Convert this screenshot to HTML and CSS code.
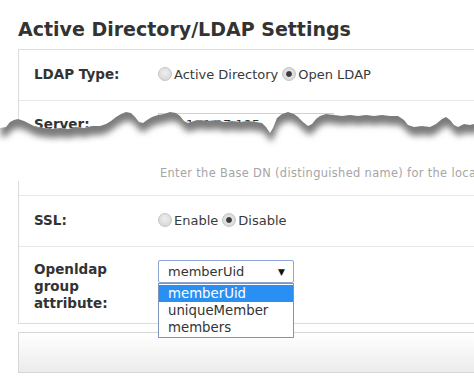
FILE: index.html
```html
<!DOCTYPE html>
<html lang="en">
  <head>
    <meta charset="UTF-8" />
    <meta name="viewport" content="width=device-width, initial-scale=1.0" />
    <title>Active Directory/LDAP Settings</title>
    <link rel="stylesheet" href="styles.css">
  </head>
  <body>
    <div class="page">
      <h1 class="title">Active Directory/LDAP Settings</h1>

      <div class="panel">
        <!-- LDAP type -->
        <div class="row">
          <div class="label">LDAP Type:</div>
          <div class="value">
            <label class="radio"><input type="radio" name="ldapType" />Active Directory</label>
            <label class="radio"><input type="radio" name="ldapType" checked />Open LDAP</label>
          </div>
        </div>

        <!-- Server (torn part) -->
        <div class="row row-server">
          <div class="label">Server:</div>
          <div class="value value-stack">
            <input class="text-input" type="text" value="10.110.27.185" />
            <div class="help">Enter the Base DN (distinguished name) for the loca</div>
          </div>
        </div>

        <!-- SSL -->
        <div class="row">
          <div class="label">SSL:</div>
          <div class="value">
            <label class="radio"><input type="radio" name="ssl" />Enable</label>
            <label class="radio"><input type="radio" name="ssl" checked />Disable</label>
          </div>
        </div>

        <!-- Group attribute -->
        <div class="row row-group">
          <div class="label">Openldap<br />group<br />attribute:</div>
          <div class="value value-top">
            <div class="select">
              <span class="select-text">memberUid</span>
              <span class="select-arrow">&#9660;</span>
              <ul class="options">
                <li class="selected">memberUid</li>
                <li>uniqueMember</li>
                <li>members</li>
              </ul>
            </div>
          </div>
        </div>
      </div>

      <div class="button-bar"></div>

      <!-- torn paper edge -->
      <svg class="tear" width="474" height="82" viewBox="0 0 474 82">
        <defs>
          <clipPath id="below">
            <path d="M0,28 L6,27 L10,22 L14,20 L18,19 L24,21 L30,24 L36,27 L44,28 L52,29 L60,28 L68,29 L76,27 L84,28 L92,26 L100,26 L106,24 L111,21 L116,17 L121,14 L126,12 L131,13 L135,17 L139,22 L143,23 L147,20 L152,17 L158,15 L164,14 L170,12 L176,13 L180,16 L184,21 L188,23 L194,21 L200,20 L208,21 L216,20 L224,22 L232,21 L240,22 L248,21 L256,22 L262,23 L266,27 L270,33 L273,28 L277,18 L282,14 L288,12 L294,14 L298,17 L303,22 L308,26 L312,24 L316,19 L320,16 L326,14 L334,15 L342,16 L350,15 L358,16 L366,15 L374,16 L382,15 L390,16 L398,16 L404,20 L408,25 L414,27 L422,26 L430,27 L436,24 L442,19 L446,17 L450,20 L454,25 L458,27 L464,24 L470,25 L474,24 L474,82 L0,82 Z" />
          </clipPath>
          <filter id="soft" x="-5%" y="-50%" width="110%" height="200%">
            <feGaussianBlur stdDeviation="3" />
          </filter>
        </defs>
        <path fill="#fff" d="M0,28 L6,27 L10,22 L14,20 L18,19 L24,21 L30,24 L36,27 L44,28 L52,29 L60,28 L68,29 L76,27 L84,28 L92,26 L100,26 L106,24 L111,21 L116,17 L121,14 L126,12 L131,13 L135,17 L139,22 L143,23 L147,20 L152,17 L158,15 L164,14 L170,12 L176,13 L180,16 L184,21 L188,23 L194,21 L200,20 L208,21 L216,20 L224,22 L232,21 L240,22 L248,21 L256,22 L262,23 L266,27 L270,33 L273,28 L277,18 L282,14 L288,12 L294,14 L298,17 L303,22 L308,26 L312,24 L316,19 L320,16 L326,14 L334,15 L342,16 L350,15 L358,16 L366,15 L374,16 L382,15 L390,16 L398,16 L404,20 L408,25 L414,27 L422,26 L430,27 L436,24 L442,19 L446,17 L450,20 L454,25 L458,27 L464,24 L470,25 L474,24 L474,64 L30,64 L30,81 L0,81 Z" />
        <g clip-path="url(#below)">
          <path fill="#7c7c7c" filter="url(#soft)" transform="translate(1,9)" d="M0,-10 L0,28 L6,27 L10,22 L14,20 L18,19 L24,21 L30,24 L36,27 L44,28 L52,29 L60,28 L68,29 L76,27 L84,28 L92,26 L100,26 L106,24 L111,21 L116,17 L121,14 L126,12 L131,13 L135,17 L139,22 L143,23 L147,20 L152,17 L158,15 L164,14 L170,12 L176,13 L180,16 L184,21 L188,23 L194,21 L200,20 L208,21 L216,20 L224,22 L232,21 L240,22 L248,21 L256,22 L262,23 L266,27 L270,33 L273,28 L277,18 L282,14 L288,12 L294,14 L298,17 L303,22 L308,26 L312,24 L316,19 L320,16 L326,14 L334,15 L342,16 L350,15 L358,16 L366,15 L374,16 L382,15 L390,16 L398,16 L404,20 L408,25 L414,27 L422,26 L430,27 L436,24 L442,19 L446,17 L450,20 L454,25 L458,27 L464,24 L470,25 L474,24 L480,24 L480,-10 Z" />
        </g>
      </svg>
    </div>
  </body>
</html>
```

FILE: styles.css
```css
* {
  box-sizing: border-box;
  margin: 0;
  padding: 0;
}

body {
  background-color: #fff;
  font-family: "DejaVu Sans", Verdana, sans-serif;
  color: #333;
  overflow: hidden;
}

.page {
  position: relative;
  padding: 17px 0 0 18px;
  width: 474px;
  height: 382px;
  overflow: hidden;
}

.title {
  font-size: 19px;
  line-height: 24px;
  font-weight: bold;
  color: #333;
  margin-bottom: 8px;
}

/* Settings panel */
.panel {
  width: 480px;
  border: 1px solid #dcdcdc;
  background-color: #fff;
}

.row {
  display: flex;
  align-items: center;
  height: 51px;
  padding-left: 15px;
  padding-bottom: 2px;
  border-bottom: 1px solid #e8e8e8;
}

.row:last-child {
  border-bottom: none;
}

.label {
  width: 124px;
  flex-shrink: 0;
  font-size: 13.5px;
  line-height: 17px;
  font-weight: bold;
  color: #333;
}

.value {
  display: flex;
  align-items: center;
  gap: 4px;
  font-size: 13px;
}

/* Radio buttons */
.radio {
  display: flex;
  align-items: center;
  gap: 2px;
  color: #3a3a3a;
}

.radio input {
  appearance: none;
  -webkit-appearance: none;
  width: 14px;
  height: 14px;
  border: 1px solid #c4c4c4;
  border-radius: 50%;
  background: radial-gradient(circle at 50% 40%, #eeeeee 0%, #d2d2d2 100%);
  margin: 0;
}

.radio input:checked {
  background: radial-gradient(circle, #3c3c3c 0, #3c3c3c 2.4px, #e2e2e2 3.4px, #d0d0d0 100%);
}

/* Server row, mostly torn away */
.row-server {
  height: 95px;
  align-items: flex-start;
  padding-top: 12px;
  padding-bottom: 0;
}

.row-server .label {
  line-height: 23px;
}

.value-stack {
  flex-direction: column;
  align-items: flex-start;
  gap: 0;
}

.text-input {
  width: 176px;
  height: 23px;
  border: 1px solid #cfcfcf;
  padding: 0 6px;
  font-family: "DejaVu Sans", Verdana, sans-serif;
  font-size: 13px;
  color: #333;
}

.help {
  margin-top: 30px;
  margin-left: 2px;
  font-size: 11.4px;
  line-height: 14px;
  letter-spacing: 0.35px;
  color: #a5a5a5;
  white-space: nowrap;
}

/* Group attribute row */
.row-group {
  height: 76px;
  align-items: flex-start;
  padding-top: 14px;
  padding-bottom: 0;
}

.value-top {
  margin-top: -1px;
}

.select {
  position: relative;
  display: flex;
  align-items: center;
  justify-content: space-between;
  width: 136px;
  height: 23px;
  padding: 0 8px 0 9px;
  border: 1px solid #8ea6d6;
  border-radius: 2px;
  background-color: #fff;
  font-size: 13px;
  color: #333;
}

.select-arrow {
  font-size: 9px;
  color: #111;
}

.options {
  position: absolute;
  top: 22px;
  left: -1px;
  width: 136px;
  list-style: none;
  padding: 1px 0;
  border: 1px solid #7f93bd;
  background-color: #fff;
  z-index: 3;
}

.options li {
  height: 17px;
  line-height: 17px;
  padding-left: 9px;
  font-size: 13.3px;
  color: #333;
}

.options li.selected {
  background-color: #2a8ff2;
  color: #fff;
}

/* Bar below the panel */
.button-bar {
  width: 480px;
  height: 41px;
  margin-top: 8px;
  border: 1px solid #d6d6d6;
  background: linear-gradient(#ffffff, #ececec);
}

/* Torn paper overlay */
.tear {
  position: absolute;
  top: 100px;
  left: 0;
  z-index: 2;
}
```
